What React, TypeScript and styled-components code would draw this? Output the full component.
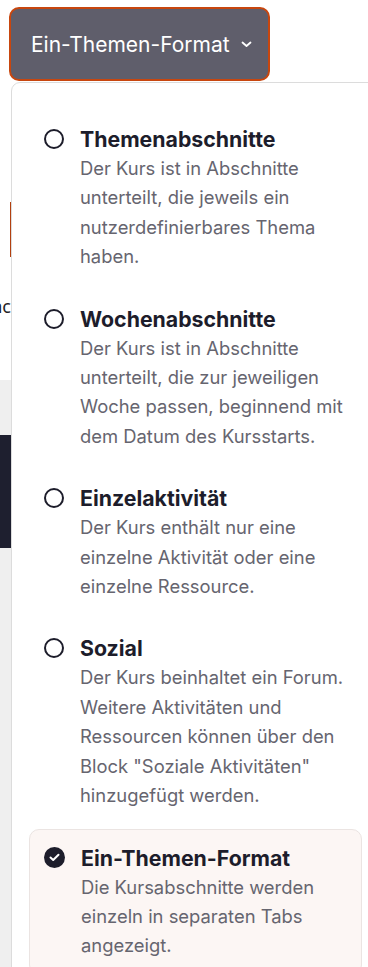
import styled, { createGlobalStyle } from "styled-components";

const GlobalStyle = createGlobalStyle`
  html, body {
    margin: 0;
    padding: 0;
    background: #ffffff;
  }
  body {
    font-family: Inter, "Noto Sans", "Liberation Sans", sans-serif;
  }
  * {
    box-sizing: border-box;
  }
`;

const Page = styled.div`
  position: relative;
  width: 368px;
  height: 967px;
  overflow: hidden;
  background: #ffffff;
`;

const Toolbar = styled.div`
  padding: 7px 0 0 9px;
`;

const FormatButton = styled.button`
  display: flex;
  align-items: center;
  gap: 11px;
  width: 261px;
  height: 74px;
  padding: 0 0 0 20px;
  border: 2px solid #c8460e;
  border-radius: 10px;
  background: #5f5e6b;
  color: #ffffff;
  font-family: Inter, "Noto Sans", sans-serif;
  font-size: 21px;
  font-weight: 400;
  cursor: pointer;
`;

// page content that lies behind the open menu
const Backdrop = styled.div`
  display: flex;
  flex-direction: column;
`;

const FocusedField = styled.div<{ $top: number }>`
  margin-top: ${(p) => p.$top}px;
  width: 11px;
  height: 55px;
  border-right: 1.5px solid #b2400f;
`;

const CutLabel = styled.div`
  display: flex;
  justify-content: flex-end;
  width: 11px;
  margin-top: 38px;
  overflow: hidden;
  white-space: nowrap;
  font-family: "Segoe UI", "Noto Sans", sans-serif;
  font-size: 18px;
  line-height: 22px;
  color: #1d2125;
`;

const Band = styled.div<{ $tone: string; $h: number; $top?: number }>`
  height: ${(p) => p.$h}px;
  margin-top: ${(p) => p.$top ?? 0}px;
  background: ${(p) => p.$tone};
`;

const Menu = styled.div`
  position: absolute;
  top: 82px;
  left: 11px;
  width: 369px;
  height: 920px;
  padding: 27px 17px;
  background: #ffffff;
  border: 1px solid #dcdcdc;
  border-radius: 9px;
`;

const OptionList = styled.ul`
  display: flex;
  flex-direction: column;
  gap: 4px;
  margin: 0;
  padding: 0;
  list-style: none;
`;

const Option = styled.li<{ $selected?: boolean }>`
  display: flex;
  gap: 16px;
  padding: 13px 14px;
  border: 1px solid ${(p) => (p.$selected ? "#ebe4e2" : "transparent")};
  border-radius: 10px;
  background: ${(p) => (p.$selected ? "#fcf6f4" : "transparent")};
`;

const Radio = styled.span`
  flex: none;
  width: 20px;
  height: 20px;
  margin-top: 5px;
  border: 2px solid #1d1d2b;
  border-radius: 50%;
`;

const CheckMark = styled.span`
  flex: none;
  display: flex;
  align-items: center;
  justify-content: center;
  width: 21px;
  height: 21px;
  margin-top: 4.5px;
  border-radius: 50%;
  background: #1d1d2b;
`;

const OptionText = styled.div`
  display: flex;
  flex-direction: column;
`;

const OptionTitle = styled.span`
  font-size: 21.3px;
  font-weight: 700;
  line-height: 30px;
  color: #1d1d2b;
`;

const OptionDesc = styled.span`
  font-size: 18.4px;
  line-height: 29.4px;
  color: #66656f;
`;

const formats = [
  {
    title: "Themenabschnitte",
    desc: "Der Kurs ist in Abschnitte unterteilt, die jeweils ein nutzerdefinierbares Thema haben.",
  },
  {
    title: "Wochenabschnitte",
    desc: "Der Kurs ist in Abschnitte unterteilt, die zur jeweiligen Woche passen, beginnend mit dem Datum des Kursstarts.",
  },
  {
    title: "Einzelaktivität",
    desc: "Der Kurs enthält nur eine einzelne Aktivität oder eine einzelne Ressource.",
  },
  {
    title: "Sozial",
    desc: 'Der Kurs beinhaltet ein Forum. Weitere Aktivitäten und Ressourcen können über den Block "Soziale Aktivitäten" hinzugefügt werden.',
  },
  {
    title: "Ein-Themen-Format",
    desc: "Die Kursabschnitte werden einzeln in separaten Tabs angezeigt.",
  },
];

const selectedFormat = "Ein-Themen-Format";

function Chevron() {
  return (
    <svg width="11" height="7" viewBox="0 0 11 7" fill="none">
      <polyline points="1.5,1.5 5.5,5 9.5,1.5" stroke="#ffffff" strokeWidth="1.8" strokeLinecap="round" strokeLinejoin="round" />
    </svg>
  );
}

function Check() {
  return (
    <svg width="11" height="9" viewBox="0 0 11 9" fill="none">
      <polyline points="1.5,4.5 4.2,7 9.5,1.8" stroke="#ffffff" strokeWidth="2" strokeLinecap="round" strokeLinejoin="round" />
    </svg>
  );
}

export default function App() {
  return (
    <Page>
      <GlobalStyle />
      <Toolbar>
        <FormatButton>
          {selectedFormat}
          <Chevron />
        </FormatButton>
      </Toolbar>

      <Backdrop>
        <FocusedField $top={121} />
        <CutLabel>Kursformat anc</CutLabel>
        <Band $tone="#efefef" $h={55} $top={63} />
        <Band $tone="#1e1f2f" $h={113} />
        <Band $tone="#efefef" $h={420} />
      </Backdrop>

      <Menu>
        <OptionList>
          {formats.map((f) => {
            const selected = f.title === selectedFormat;
            return (
              <Option key={f.title} $selected={selected}>
                {selected ? (
                  <CheckMark>
                    <Check />
                  </CheckMark>
                ) : (
                  <Radio />
                )}
                <OptionText>
                  <OptionTitle>{f.title}</OptionTitle>
                  <OptionDesc>{f.desc}</OptionDesc>
                </OptionText>
              </Option>
            );
          })}
        </OptionList>
      </Menu>
    </Page>
  );
}
